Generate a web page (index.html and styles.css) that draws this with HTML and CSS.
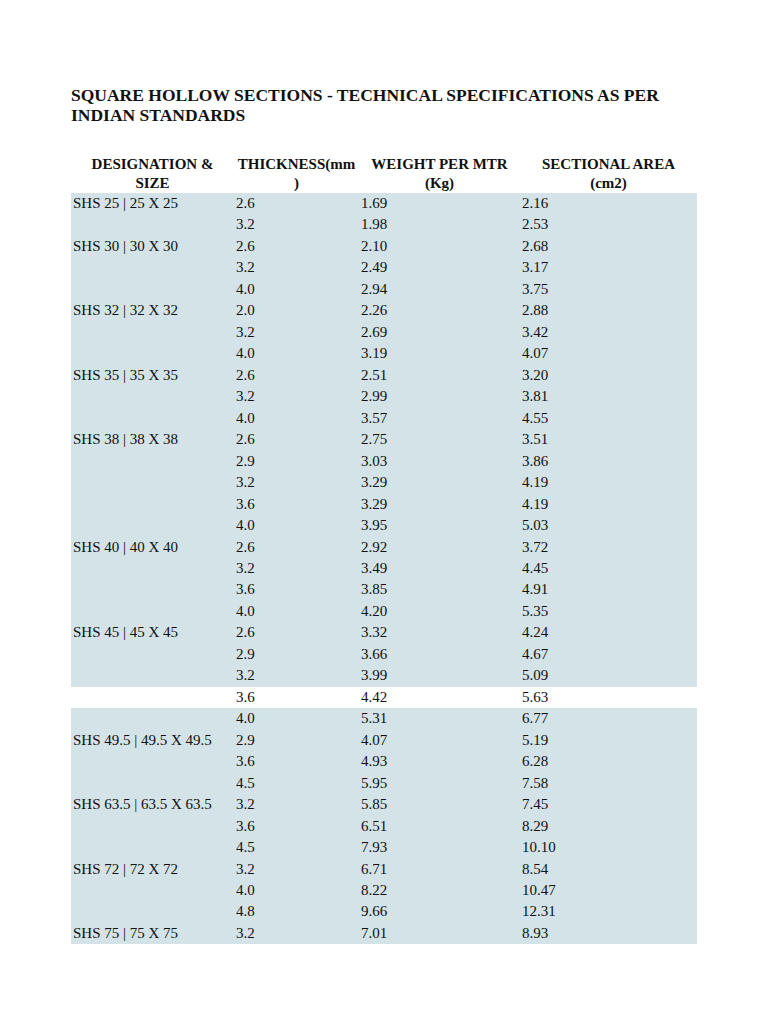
FILE: index.html
```html
<!DOCTYPE html>
<html>
<head>
<meta charset="utf-8">
<link rel="stylesheet" href="styles.css">
</head>
<body>
<div class="page">
  <h1 class="title">SQUARE HOLLOW SECTIONS - TECHNICAL SPECIFICATIONS AS PER<br>INDIAN STANDARDS</h1>
  <table class="spec">
    <colgroup>
      <col class="c1"><col class="c2"><col class="c3"><col class="c4">
    </colgroup>
    <thead>
      <tr>
        <th>DESIGNATION &amp;<br>SIZE</th>
        <th>THICKNESS(mm<br>)</th>
        <th>WEIGHT PER MTR<br>(Kg)</th>
        <th>SECTIONAL AREA<br>(cm2)</th>
      </tr>
    </thead>
    <tbody>
      <tr><td>SHS 25 | 25 X 25</td><td>2.6</td><td>1.69</td><td>2.16</td></tr>
      <tr><td></td><td>3.2</td><td>1.98</td><td>2.53</td></tr>
      <tr><td>SHS 30 | 30 X 30</td><td>2.6</td><td>2.10</td><td>2.68</td></tr>
      <tr><td></td><td>3.2</td><td>2.49</td><td>3.17</td></tr>
      <tr><td></td><td>4.0</td><td>2.94</td><td>3.75</td></tr>
      <tr><td>SHS 32 | 32 X 32</td><td>2.0</td><td>2.26</td><td>2.88</td></tr>
      <tr><td></td><td>3.2</td><td>2.69</td><td>3.42</td></tr>
      <tr><td></td><td>4.0</td><td>3.19</td><td>4.07</td></tr>
      <tr><td>SHS 35 | 35 X 35</td><td>2.6</td><td>2.51</td><td>3.20</td></tr>
      <tr><td></td><td>3.2</td><td>2.99</td><td>3.81</td></tr>
      <tr><td></td><td>4.0</td><td>3.57</td><td>4.55</td></tr>
      <tr><td>SHS 38 | 38 X 38</td><td>2.6</td><td>2.75</td><td>3.51</td></tr>
      <tr><td></td><td>2.9</td><td>3.03</td><td>3.86</td></tr>
      <tr><td></td><td>3.2</td><td>3.29</td><td>4.19</td></tr>
      <tr><td></td><td>3.6</td><td>3.29</td><td>4.19</td></tr>
      <tr><td></td><td>4.0</td><td>3.95</td><td>5.03</td></tr>
      <tr><td>SHS 40 | 40 X 40</td><td>2.6</td><td>2.92</td><td>3.72</td></tr>
      <tr><td></td><td>3.2</td><td>3.49</td><td>4.45</td></tr>
      <tr><td></td><td>3.6</td><td>3.85</td><td>4.91</td></tr>
      <tr><td></td><td>4.0</td><td>4.20</td><td>5.35</td></tr>
      <tr><td>SHS 45 | 45 X 45</td><td>2.6</td><td>3.32</td><td>4.24</td></tr>
      <tr><td></td><td>2.9</td><td>3.66</td><td>4.67</td></tr>
      <tr><td></td><td>3.2</td><td>3.99</td><td>5.09</td></tr>
      <tr class="plain"><td></td><td>3.6</td><td>4.42</td><td>5.63</td></tr>
      <tr><td></td><td>4.0</td><td>5.31</td><td>6.77</td></tr>
      <tr><td>SHS 49.5 | 49.5 X 49.5</td><td>2.9</td><td>4.07</td><td>5.19</td></tr>
      <tr><td></td><td>3.6</td><td>4.93</td><td>6.28</td></tr>
      <tr><td></td><td>4.5</td><td>5.95</td><td>7.58</td></tr>
      <tr><td>SHS 63.5 | 63.5 X 63.5</td><td>3.2</td><td>5.85</td><td>7.45</td></tr>
      <tr><td></td><td>3.6</td><td>6.51</td><td>8.29</td></tr>
      <tr><td></td><td>4.5</td><td>7.93</td><td>10.10</td></tr>
      <tr><td>SHS 72 | 72 X 72</td><td>3.2</td><td>6.71</td><td>8.54</td></tr>
      <tr><td></td><td>4.0</td><td>8.22</td><td>10.47</td></tr>
      <tr><td></td><td>4.8</td><td>9.66</td><td>12.31</td></tr>
      <tr><td>SHS 75 | 75 X 75</td><td>3.2</td><td>7.01</td><td>8.93</td></tr>
    </tbody>
  </table>
</div>
</body>
</html>
```
FILE: styles.css
```css
html, body {
  margin: 0;
  padding: 0;
  background: #ffffff;
}
body {
  font-family: "Liberation Serif", "Times New Roman", serif;
  color: #111111;
}
.page {
  padding: 85px 0 0 71px;
  width: 626px;
}
.title {
  margin: 0;
  font-size: 17.5px;
  line-height: 20px;
  font-weight: bold;
}
.spec {
  margin-top: 29px;
  border-collapse: collapse;
  border-spacing: 0;
  width: 626px;
  table-layout: fixed;
  font-size: 15px;
}
.c1 { width: 163px; }
.c2 { width: 125px; }
.c3 { width: 161px; }
.c4 { width: 177px; }
.spec th {
  font-weight: bold;
  text-align: center;
  line-height: 19px;
  padding: 1px 0 0 0;
  vertical-align: top;
}
.spec tbody tr {
  background: #d3e3e7;
  height: 21.47px;
}
.spec tbody tr.plain {
  background: transparent;
}
.spec td {
  padding: 0 0 0 2px;
  line-height: 21.47px;
  white-space: nowrap;
}
```
